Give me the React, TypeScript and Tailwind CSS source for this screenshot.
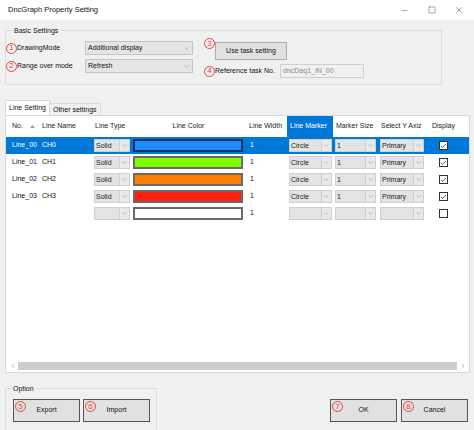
import { Check, ChevronDown, ChevronLeft, ChevronRight, Minus, Square, X } from "lucide-react";

type Row = {
  no: string;
  name: string;
  type: string;
  color: string;
  marker: string;
  size: string;
  axis: string;
  display: boolean;
};

const rows: Row[] = [
  { no: "Line_00", name: "CH0", type: "Solid", color: "#1e8cff", marker: "Circle", size: "1", axis: "Primary", display: true },
  { no: "Line_01", name: "CH1", type: "Solid", color: "#80ff00", marker: "Circle", size: "1", axis: "Primary", display: true },
  { no: "Line_02", name: "CH2", type: "Solid", color: "#ff8000", marker: "Circle", size: "1", axis: "Primary", display: true },
  { no: "Line_03", name: "CH3", type: "Solid", color: "#ff2010", marker: "Circle", size: "1", axis: "Primary", display: true },
  { no: "", name: "", type: "", color: "#ffffff", marker: "", size: "", axis: "", display: false },
];

function Num({ n }: { n: number }) {
  return (
    <span className="inline-flex h-[11px] w-[11px] shrink-0 items-center justify-center rounded-full border border-[#e3473f] text-[8px] leading-none text-[#e3473f]">
      {n}
    </span>
  );
}

function GridCombo({ value, width }: { value: string; width: string }) {
  return (
    <div className={`flex h-[13px] items-stretch border border-[#cfcfcf] bg-[#e3e3e3] ${width}`}>
      <span className="flex-1 truncate pl-[1px] leading-[11px] text-[#1a1a1a]">{value}</span>
      <span className="flex w-[10px] items-center justify-center border-l border-[#cfcfcf] bg-[#e9e9e9]">
        <ChevronDown size={7} strokeWidth={1.5} className="text-[#7a7a7a]" />
      </span>
    </div>
  );
}

function DialogButton({ n, label }: { n: number; label: string }) {
  return (
    <button
      type="button"
      className="relative h-[23px] w-[67px] border border-[#555] bg-[#e1e1e1] text-[7px] text-[#111]"
    >
      <span className="absolute left-[1px] top-[1px] flex">
        <Num n={n} />
      </span>
      {label}
    </button>
  );
}

export default function App() {
  return (
    <div className="relative h-[430px] w-[474px] overflow-hidden bg-[#f0f0f0] text-[7px] text-[#111] [font-family:'Liberation_Sans',Arial,sans-serif]">
      {/* title bar */}
      <div className="flex h-[20px] items-center bg-white pl-[8px]">
        <span className="flex-1 text-[7.5px] text-[#111]">DncGraph Property Setting</span>
        <div className="flex h-full items-center pr-[2px] text-[#222]">
          <span className="flex w-[27px] justify-center">
            <Minus size={9} strokeWidth={1} />
          </span>
          <span className="flex w-[27px] justify-center">
            <Square size={8} strokeWidth={1.2} />
          </span>
          <span className="flex w-[27px] justify-center">
            <X size={10} strokeWidth={1} />
          </span>
        </div>
      </div>

      {/* basic settings */}
      <div className="relative ml-[5px] mt-[10px] flex h-[55px] w-[437px] border border-[#dcdcdc]">
        <span className="absolute -top-[5px] left-[6px] bg-[#f0f0f0] px-[2px] leading-[9px]">Basic Settings</span>
        <div className="flex flex-col gap-[4px] pt-[10px]">
          <div className="flex h-[14px] items-center">
            <Num n={1} />
            <span className="w-[68px]">DrawingMode</span>
            <div className="flex h-[14px] w-[108px] items-center justify-between border border-[#c4c4c4] bg-[#e5e5e5] px-[2px]">
              <span>Additional display</span>
              <ChevronDown size={7} strokeWidth={1.5} className="text-[#777]" />
            </div>
          </div>
          <div className="flex h-[14px] items-center">
            <Num n={2} />
            <span className="w-[68px]">Range over mode</span>
            <div className="flex h-[14px] w-[108px] items-center justify-between border border-[#c4c4c4] bg-[#e5e5e5] px-[2px]">
              <span>Refresh</span>
              <ChevronDown size={7} strokeWidth={1.5} className="text-[#777]" />
            </div>
          </div>
        </div>
        <div className="ml-[11px] flex flex-col pt-[7px]">
          <div className="flex items-start">
            <Num n={3} />
            <button
              type="button"
              className="mt-[4px] h-[18px] w-[72px] border border-[#adadad] bg-[#e1e1e1] text-[7px] text-[#111]"
            >
              Use task setting
            </button>
          </div>
          <div className="mt-[4px] flex items-center">
            <Num n={4} />
            <span className="w-[65px]">Reference task No.</span>
            <div className="flex h-[14px] w-[84px] items-center border border-[#cfcfcf] bg-[#f0f0f0] px-[2px] text-[#8a8a8a]">
              dncDaq1_IN_00
            </div>
          </div>
        </div>
      </div>

      {/* tabs */}
      <div className="ml-[5px] mt-[15px] flex items-end">
        <div className="h-[15px] border border-b-0 border-[#d9d9d9] bg-white px-[3px] leading-[14px]">Line Setting</div>
        <div className="h-[12px] border border-b-0 border-l-0 border-[#d9d9d9] bg-[#f0f0f0] px-[3px] leading-[11px]">
          Other settings
        </div>
      </div>

      {/* grid */}
      <div className="ml-[5px] flex h-[258px] w-[465px] flex-col border border-[#d9d9d9] bg-white">
        <div className="flex h-[21px] items-stretch text-[#222]">
          <div className="flex w-[34px] items-center pl-[6px]">
            No.
            <svg width="5" height="3" viewBox="0 0 5 3" className="ml-[7px]">
              <path d="M0 3 L2.5 0 L5 3 Z" fill="#a0a0a0" />
            </svg>
          </div>
          <div className="flex w-[52px] items-center pl-[2px]">Line Name</div>
          <div className="flex w-[40px] items-center pl-[3px]">Line Type</div>
          <div className="flex w-[113px] items-center justify-center">Line Color</div>
          <div className="flex w-[42px] items-center pl-[4px]">Line Width</div>
          <div className="flex w-[46px] items-center bg-[#0078d7] pl-[3px] text-white">Line Marker</div>
          <div className="flex w-[45px] items-center pl-[3px]">Marker Size</div>
          <div className="flex w-[48px] items-center pl-[3px]">Select Y Axiz</div>
          <div className="flex w-[42px] items-center pl-[6px]">Display</div>
        </div>

        {rows.map((row, i) => {
          const selected = i === 0;
          return (
            <div
              key={i}
              className={`flex h-[17px] items-center ${selected ? "bg-[#0078d7] text-white" : "text-[#111]"}`}
            >
              <div className="w-[34px] pl-[6px]">{row.no}</div>
              <div className="w-[52px] pl-[2px]">{row.name}</div>
              <div className="w-[40px] pl-[2px]">
                <GridCombo value={row.type} width="w-[36px]" />
              </div>
              <div className="w-[113px] pl-[1px]">
                <div
                  className={`h-[13px] w-[110px] border-2 ${selected ? "border-[#10335c]" : "border-[#6a6a6a]"}`}
                  style={{ backgroundColor: row.color }}
                />
              </div>
              <div className="w-[42px] pl-[5px]">1</div>
              <div className="w-[46px] pl-[2px]">
                <GridCombo value={row.marker} width="w-[43px]" />
              </div>
              <div className="w-[45px] pl-[2px]">
                <GridCombo value={row.size} width="w-[41px]" />
              </div>
              <div className="w-[48px] pl-[2px]">
                <GridCombo value={row.axis} width="w-[44px]" />
              </div>
              <div className="w-[42px] pl-[13px]">
                <span className="flex h-[9px] w-[9px] items-center justify-center border border-[#333] bg-white">
                  {row.display && <Check size={8} strokeWidth={2.5} className="text-[#222]" />}
                </span>
              </div>
            </div>
          );
        })}

        <div className="flex-1" />
        <div className="mx-[1px] mb-[2px] flex h-[9px] items-center">
          <span className="flex w-[11px] justify-center text-[#666]">
            <ChevronLeft size={6} strokeWidth={2} />
          </span>
          <div className="h-[8px] flex-1 bg-[#cdcdcd]" />
          <span className="flex w-[11px] justify-center text-[#666]">
            <ChevronRight size={6} strokeWidth={2} />
          </span>
        </div>
      </div>

      {/* bottom */}
      <div className="mt-[15px] flex items-start">
        <div className="relative ml-[5px] flex h-[50px] w-[152px] gap-[3px] border border-[#dcdcdc] pl-[7px] pt-[10px]">
          <span className="absolute -top-[5px] left-[5px] bg-[#f0f0f0] px-[2px] leading-[9px]">Option</span>
          <DialogButton n={5} label="Export" />
          <DialogButton n={6} label="Import" />
        </div>
        <div className="ml-[173px] mt-[11px] flex gap-[4px]">
          <DialogButton n={7} label="OK" />
          <DialogButton n={8} label="Cancel" />
        </div>
      </div>
    </div>
  );
}
